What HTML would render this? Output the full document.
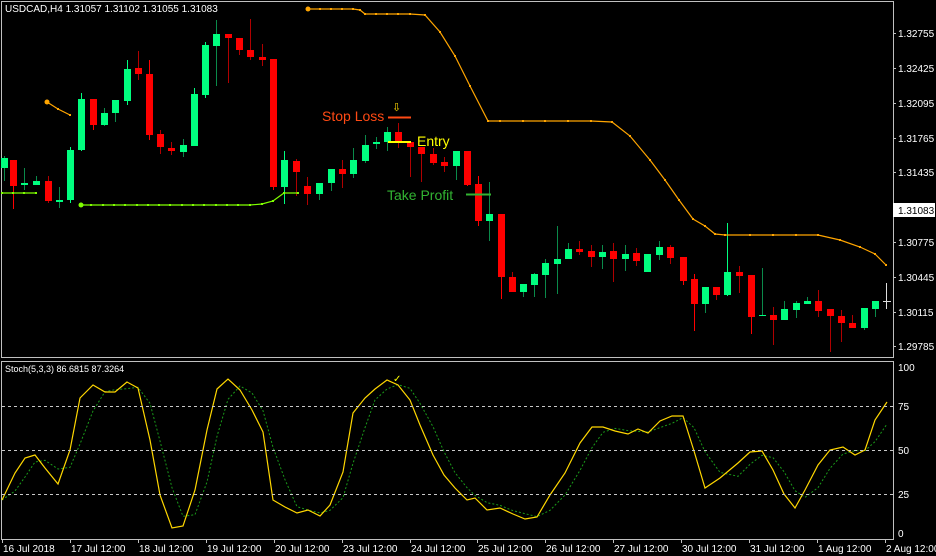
<!DOCTYPE html>
<html><head><meta charset="utf-8"><style>
html,body{margin:0;padding:0;background:#000;width:936px;height:556px;overflow:hidden}
svg{display:block}
text{font-family:"Liberation Sans",sans-serif}
</style></head><body>
<svg id="s" width="936" height="556" xmlns="http://www.w3.org/2000/svg">
<rect width="936" height="556" fill="#000"/>
<g fill="none" stroke="#c0c0c0" stroke-width="1">
<path d="M1.5 1.5H893.5V357.5H1.5Z"/>
<path d="M1.5 361.5H893.5V539.5H1.5Z"/>
</g>
<text x="5" y="12" fill="#fff" font-size="10">USDCAD,H4  1.31057 1.31102 1.31055 1.31083</text>
<text x="5" y="372" fill="#fff" font-size="9">Stoch(5,3,3) 86.6815 87.3264</text>
<g id="ax" fill="#fff" font-size="10"></g>
<rect x="893" y="203" width="42" height="14" fill="#fff"/>
<text x="898" y="214" fill="#000" font-size="10">1.31083</text>
<g id="c"></g>
<g id="ind"></g>
<text x="322" y="121" fill="#ff4a14" font-size="14">Stop Loss</text>
<line x1="388" y1="117.5" x2="411" y2="117.5" stroke="#ff4a14" stroke-width="2"/>
<text x="392" y="111" fill="#ffd700" font-size="11">⇩</text>
<line x1="388" y1="142" x2="411" y2="142" stroke="#ffff00" stroke-width="2"/>
<text x="417" y="146" fill="#ffff00" font-size="14">Entry</text>
<text x="387" y="200" fill="#32b432" font-size="14">Take Profit</text>
<line x1="466" y1="194.5" x2="491" y2="194.5" stroke="#32b432" stroke-width="2"/>
<text x="393" y="382" fill="#ffff00" font-size="10">✓</text>
</svg>
<script>
var NS="http://www.w3.org/2000/svg",s=document.getElementById('s');
function el(p,t,a,tx){var e=document.createElementNS(NS,t);for(var k in a)e.setAttribute(k,a[k]);if(tx)e.textContent=tx;p.appendChild(e);return e;}
var ax=document.getElementById('ax');
[["1.32755",33],["1.32425",68],["1.32095",103],["1.31765",138],["1.31435",172],["1.30775",242],["1.30445",277],["1.30115",312],["1.29785",346]].forEach(function(l){
el(ax,'text',{x:898,y:l[1]+4},l[0]);el(s,'line',{x1:893,x2:896,y1:l[1]+.5,y2:l[1]+.5,stroke:'#c0c0c0'});});
[["100",367],["75",406],["50",450],["25",494],["0",533]].forEach(function(l){el(ax,'text',{x:898,y:l[1]+4},l[0]);});
[406,450,494].forEach(function(y){el(s,'line',{x1:2,x2:893,y1:y+.5,y2:y+.5,stroke:'#c8c8c8','stroke-dasharray':'3,3'});});
[["16 Jul 2018",2],["17 Jul 12:00",70],["18 Jul 12:00",138],["19 Jul 12:00",206],["20 Jul 12:00",274],["23 Jul 12:00",342],["24 Jul 12:00",410],["25 Jul 12:00",477],["26 Jul 12:00",545],["27 Jul 12:00",613],["30 Jul 12:00",681],["31 Jul 12:00",749],["1 Aug 12:00",817],["2 Aug 12:00",885]].forEach(function(l){
el(ax,'text',{x:l[1]+1,y:552},l[0]);el(s,'line',{x1:l[1]+.5,x2:l[1]+.5,y1:539,y2:543,stroke:'#c0c0c0'});});
// candles: [x, type g/r, bodyTop, bodyBot, wickTop, wickBot]
var C=[[4,'g',158,168,156,181],[13,'r',160,186,160,209],[24,'g',183,185,168,190],[36,'g',181,185,176,185],[48,'r',181,201,176,203],[59,'g',200,202,187,208],[70,'g',150,200,147,203],[81,'g',99,150,93,151],[93,'r',99,125,99,130],[104,'g',113,125,108,126],[115,'g',100,113,100,122],[127,'g',69,101,60,105],[138,'r',68,74,51,80],[149,'r',74,135,60,140],[160,'r',134,147,130,154],[171,'r',148,151,142,155],[183,'g',145,152,139,157],[194,'g',94,146,88,146],[205,'g',45,95,42,98],[216,'g',34,46,20,86],[228,'r',34,38,34,83],[239,'r',38,50,38,55],[250,'r',50,57,19,60],[262,'r',57,60,44,66],[273,'r',59,187,59,190],[284,'g',160,187,151,204],[296,'r',161,172,159,196],[307,'r',186,194,177,205],[319,'g',183,194,183,200],[331,'g',169,183,169,191],[342,'r',169,174,160,188],[353,'g',160,174,148,178],[365,'g',145,161,135,163],[376,'g',142,144,137,149],[387,'g',132,142,127,151],[398,'r',132,142,123,148],[410,'r',142,147,142,177],[421,'r',147,154,147,182],[433,'r',154,163,148,165],[444,'r',162,166,157,172],[456,'g',151,166,151,180],[467,'r',151,185,151,186],[478,'r',184,221,176,226],[489,'g',214,221,182,241],[501,'r',214,277,214,299],[512,'r',277,292,272,292],[523,'g',284,292,284,297],[534,'g',274,285,273,297],[545,'g',263,275,259,298],[557,'g',259,264,226,294],[568,'g',249,259,243,259],[579,'r',249,252,241,255],[591,'r',251,257,245,267],[602,'g',252,257,245,269],[613,'r',251,259,243,282],[625,'g',254,259,245,271],[636,'r',253,261,248,266],[647,'g',254,272,254,272],[659,'g',247,255,241,260],[670,'r',247,258,245,264],[683,'r',257,281,257,285],[694,'r',279,304,274,331],[705,'g',287,304,287,313],[716,'r',287,295,287,300],[727,'g',272,295,223,296],[739,'r',272,276,266,293],[751,'r',275,317,275,334],[762,'g',315,316,268,316],[773,'r',315,320,307,345],[784,'g',309,320,301,320],[796,'g',303,310,301,318],[807,'g',301,304,297,304],[818,'r',301,311,290,317],[830,'r',309,316,309,352],[841,'r',316,323,310,342],[852,'r',323,328,315,328],[864,'g',308,328,308,330],[875,'g',301,309,301,317]];
var cg=document.getElementById('c');
C.forEach(function(c){var col=c[1]=='g'?'#00ff7f':'#ff0000',wc=c[1]=='g'?'#0a8a4a':'#b00000';
if(c[3]-c[2]>20)wc=col;
el(cg,'line',{x1:c[0]+.5,x2:c[0]+.5,y1:c[4],y2:c[5],stroke:wc});
el(cg,'rect',{x:c[0]-3,y:c[2],width:7,height:Math.max(1,c[3]-c[2]),fill:col});});
el(cg,'line',{x1:886.5,x2:886.5,y1:283,y2:309,stroke:'#ddd'});
el(cg,'line',{x1:883,x2:891,y1:301.5,y2:301.5,stroke:'#ddd'});
// orange line
function pl(pts,col,dash){el(cg,'polyline',{points:pts.map(function(p){return p.join(',')}).join(' '),fill:'none',stroke:col,'stroke-width':1.2,'stroke-dasharray':dash||''});
pts.forEach(function(p){el(cg,'rect',{x:p[0]-1,y:p[1]-1,width:2,height:2,fill:col});});}
pl([[47,102],[58,109],[70,115]],'#ffa500');el(cg,'circle',{cx:47,cy:102,r:2.5,fill:'#ffa500'});
var o=[[308,9],[320,9],[331,9],[342,9],[353,9],[360,10],[365,14],[376,14],[387,14],[398,14],[410,14],[425,15],[440,32],[455,56],[470,86],[488,121],[500,121],[523,121],[545,121],[568,121],[591,121],[612,122],[630,136],[650,160],[665,180],[679,200],[693,219],[705,226],[715,234],[725,235],[750,235],[773,235],[796,235],[818,235],[840,240],[860,247],[875,254],[886,265]];
pl(o,'#ffa500');el(cg,'circle',{cx:308,cy:9,r:2.5,fill:'#ffa500'});
pl([[2,193],[13,193],[24,193],[36,193]],'#7fff00');
var g=[];for(var x=80;x<=250;x+=11.3)g.push([Math.round(x),205]);g.push([262,204],[273,201],[284,193],[298,193]);
pl(g,'#7fff00');el(cg,'circle',{cx:81,cy:205,r:2.5,fill:'#7fff00'});
// stochastic
var Y=[[2,500],[15,473],[25,458],[35,455],[45,468],[58,484],[70,450],[80,398],[93,385],[105,392],[115,392],[127,382],[138,388],[150,440],[160,495],[172,528],[183,526],[195,490],[207,430],[217,389],[228,379],[240,390],[252,410],[263,432],[273,500],[285,507],[297,513],[308,510],[320,516],[330,505],[343,472],[353,413],[365,398],[375,389],[387,380],[398,385],[410,400],[420,425],[433,455],[444,475],[455,488],[467,500],[475,498],[487,510],[500,508],[513,514],[525,519],[537,517],[550,495],[565,473],[580,443],[592,427],[603,427],[615,431],[628,434],[638,429],[648,433],[660,421],[672,416],[683,416],[694,451],[705,488],[720,478],[738,463],[750,452],[762,451],[773,470],[784,494],[795,508],[805,490],[818,465],[830,450],[843,447],[855,455],[865,450],[875,420],[887,402]];
var sig=Y.map(function(p,i){var a=Y[Math.max(0,i-2)][1],b=Y[Math.max(0,i-1)][1];return [p[0],(a+b+p[1])/3];});
var ig=document.getElementById('ind');
el(ig,'polyline',{points:sig.map(function(p){return p.join(',')}).join(' '),fill:'none',stroke:'#1a9a1a','stroke-dasharray':'2,2'});
el(ig,'polyline',{points:Y.map(function(p){return p.join(',')}).join(' '),fill:'none',stroke:'#ffd700','stroke-width':1.2});
</script>
</body></html>
